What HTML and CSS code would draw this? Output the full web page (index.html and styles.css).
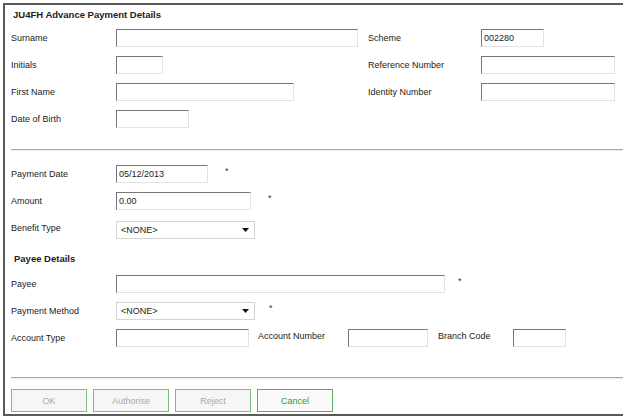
FILE: index.html
```html
<!DOCTYPE html>
<html>
<head>
<meta charset="utf-8">
<link rel="stylesheet" href="styles.css">
</head>
<body>
<div class="frame">
  <div class="title">JU4FH Advance Payment Details</div>
  <div class="top-grid">
    <span class="lbl">Surname</span>
    <span class="cell"><span class="inp w242"></span></span>
    <span class="lbl">Scheme</span>
    <span class="cell"><span class="inp w63">002280</span></span>

    <span class="lbl">Initials</span>
    <span class="cell"><span class="inp w47"></span></span>
    <span class="lbl">Reference Number</span>
    <span class="cell"><span class="inp w134"></span></span>

    <span class="lbl">First Name</span>
    <span class="cell"><span class="inp w178"></span></span>
    <span class="lbl">Identity Number</span>
    <span class="cell"><span class="inp w134"></span></span>

    <span class="lbl">Date of Birth</span>
    <span class="cell"><span class="inp w73"></span></span>
    <span class="lbl"></span>
    <span class="cell"></span>
  </div>
  <div class="sep sep1"></div>
  <div class="row">
    <span class="lbl col1">Payment Date</span>
    <span class="inp w92">05/12/2013</span>
    <span class="req m17">*</span>
  </div>
  <div class="row">
    <span class="lbl col1">Amount</span>
    <span class="inp w135">0.00</span>
    <span class="req m17">*</span>
  </div>
  <div class="row">
    <span class="lbl col1">Benefit Type</span>
    <span class="sel w139 low"><span>&lt;NONE&gt;</span><svg width="7" height="4" viewBox="0 0 7 4"><path d="M0 0H7L3.5 4Z" fill="#111"/></svg></span>
  </div>
  <div class="heading">Payee Details</div>
  <div class="row">
    <span class="lbl col1">Payee</span>
    <span class="inp w329"></span>
    <span class="req m13">*</span>
  </div>
  <div class="row">
    <span class="lbl col1">Payment Method</span>
    <span class="sel w139"><span>&lt;NONE&gt;</span><svg width="7" height="4" viewBox="0 0 7 4"><path d="M0 0H7L3.5 4Z" fill="#111"/></svg></span>
    <span class="req m14">*</span>
  </div>
  <div class="row">
    <span class="lbl col1">Account Type</span>
    <span class="inp w133"></span>
    <span class="lbl col-acc up">Account Number</span>
    <span class="inp w80"></span>
    <span class="lbl col-br up">Branch Code</span>
    <span class="inp w53"></span>
  </div>
  <div class="sep sep2"></div>
  <div class="buttons">
    <span class="btn disabled">OK</span>
    <span class="btn disabled">Authorise</span>
    <span class="btn disabled">Reject</span>
    <span class="btn active">Cancel</span>
  </div>
</div>
</body>
</html>
```

FILE: styles.css
```css
html, body {
  margin: 0;
  padding: 0;
  background: #ffffff;
}
body {
  font-family: "Liberation Sans", Arial, sans-serif;
  font-size: 9px;
  color: #222;
}
.frame {
  margin: 3px 0 0 3px;
  width: 612px;
  height: 409px;
  border: 2px solid #5a5a5a;
  padding: 0 0 0 6px;
  box-sizing: content-box;
  background: #fff;
  display: flex;
  flex-direction: column;
}
.title {
  height: 19px;
  line-height: 20px;
  padding-left: 2px;
  font-weight: bold;
  font-size: 9.5px;
  color: #222;
}
.top-grid {
  display: grid;
  grid-template-columns: 105px 252px 113px 1fr;
  grid-auto-rows: 27px;
  align-items: center;
}
.lbl {
  white-space: nowrap;
}
.cell {
  display: flex;
  align-items: center;
}
.inp {
  display: flex;
  align-items: center;
  box-sizing: border-box;
  height: 18px;
  border: 1px solid;
  border-color: #777 #e2e2e2 #e2e2e2 #777;
  padding-left: 2px;
  color: #222;
  background: #fff;
}
.w242 { width: 242px; }
.w63 { width: 63px; }
.w47 { width: 47px; }
.w134 { width: 134px; }
.w133 { width: 133px; }
.w178 { width: 178px; }
.w73 { width: 73px; }
.w92 { width: 92px; }
.w135 { width: 135px; }
.w139 { width: 139px; }
.w329 { width: 329px; }
.w80 { width: 80px; }
.w53 { width: 53px; }
.sep {
  height: 0;
  border-top: 1px solid #a8a8a8;
  border-bottom: 1px solid #ececec;
}
.sep1 { margin-top: 17px; margin-bottom: 9px; }
.sep2 { margin-top: 26px; margin-bottom: 10px; }
.row {
  display: flex;
  align-items: center;
  height: 27px;
}
.col1 { width: 105px; flex: none; }
.col-acc { width: 90px; flex: none; margin-left: 9px; }
.col-br { width: 75px; flex: none; margin-left: 10px; }
.up { position: relative; top: -2px; }
.req {
  font-size: 9px;
  position: relative;
  top: -3px;
  color: #333;
}
.m17 { margin-left: 17px; }
.m13 { margin-left: 13px; }
.m14 { margin-left: 14px; }
.sel {
  display: flex;
  align-items: center;
  justify-content: space-between;
  box-sizing: border-box;
  height: 18px;
  border: 1px solid #d4d4d4;
  padding: 0 5px 0 4px;
  background: #fff;
}
.sel.low { position: relative; top: 2px; }
.heading {
  height: 29px;
  box-sizing: border-box;
  padding-top: 12px;
  padding-left: 3px;
  font-weight: bold;
  font-size: 9.5px;
}
.buttons {
  display: flex;
  gap: 6px;
}
.btn {
  width: 76px;
  height: 23px;
  box-sizing: border-box;
  border: 1px solid #5cae5c;
  background: #f6f6f6;
  display: flex;
  align-items: center;
  justify-content: center;
  font-size: 9px;
}
.btn.disabled { color: #a8a8a8; border-color: #7cbf7c; }
.btn.active { color: #2f9a2f; background: #fafafa; }
```
